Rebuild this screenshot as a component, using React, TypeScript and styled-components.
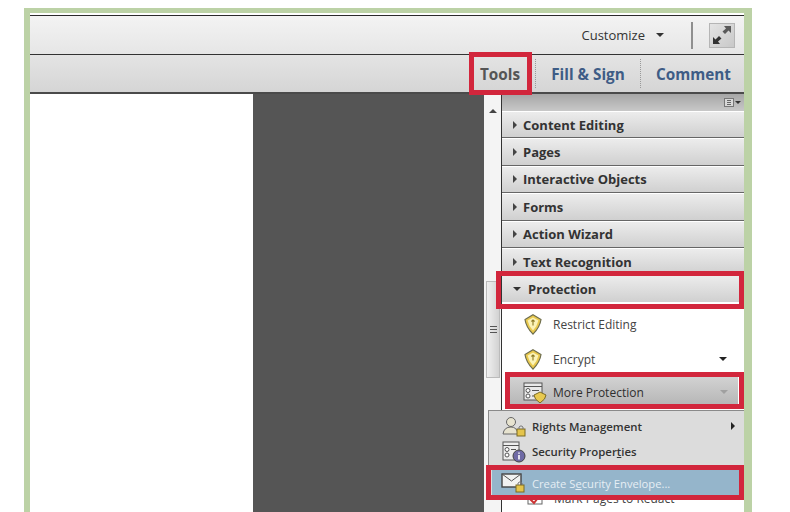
import React from "react";
import styled, { createGlobalStyle } from "styled-components";

const Global = createGlobalStyle`
  html, body { margin: 0; padding: 0; background: #fff; width: 790px; height: 512px; overflow: hidden; }
  * { box-sizing: border-box; }
  body { font-family: "Open Sans", "Liberation Sans", sans-serif; }
`;

const Frame = styled.div`
  position: relative;
  margin: 8px 0 0 24px;
  width: 728px;
  height: 504px;
  background: #bcd2a6;
  padding: 5px 8px 0 6px;
  overflow: hidden;
`;
const Window = styled.div`
  display: flex;
  flex-direction: column;
  height: 100%;
  background: #fff;
  padding-top: 2px;
`;
const TopBar = styled.div`
  height: 40px;
  flex: none;
  border-top: 1px solid #2a2a2a;
  border-bottom: 1px solid #333;
  background: linear-gradient(#f3f3f3, #e6e6e6);
  display: flex;
  align-items: center;
  justify-content: flex-end;
  padding-right: 9px;
`;
const Customize = styled.span`
  font-size: 13px;
  color: #333;
  margin-right: 11px;
`;
const Caret = styled.span<{ $color?: string; $size?: number }>`
  width: 0;
  height: 0;
  flex: none;
  border-left: ${(p) => p.$size ?? 4}px solid transparent;
  border-right: ${(p) => p.$size ?? 4}px solid transparent;
  border-top: ${(p) => p.$size ?? 4}px solid ${(p) => p.$color ?? "#333"};
`;
const VSep = styled.span`
  width: 2px;
  height: 27px;
  background: #8f8f8f;
  margin: 0 16px 0 27px;
`;
const ExpandButton = styled.span`
  width: 26px;
  height: 25px;
  background: linear-gradient(135deg, #e4e4e4, #c8c8c8);
  border: 1px solid #b5b5b5;
  display: flex;
  align-items: center;
  justify-content: center;
`;
const TabBar = styled.div`
  height: 39px;
  flex: none;
  background: linear-gradient(#e4e4e4, #d5d5d5);
  border-bottom: 2px solid #4a4a4a;
  display: flex;
  align-items: center;
  justify-content: flex-end;
`;
const Tab = styled.span<{ $active?: boolean; $w: number }>`
  width: ${(p) => p.$w}px;
  text-align: center;
  font-size: 15.3px;
  font-weight: 700;
  color: ${(p) => (p.$active ? "#555" : "#3e5c86")};
  white-space: nowrap;
`;
const TabSep = styled.span`
  height: 29px;
  border-left: 1px dotted #999;
`;
const LastTabSep = styled(TabSep)`
  margin-right: 2px;
`;
const Body = styled.div`
  flex: 1;
  display: flex;
  min-height: 0;
`;
const Doc = styled.div`
  width: 223px;
  background: #fff;
  flex: none;
`;
const Gutter = styled.div`
  width: 231px;
  background: #555;
  flex: none;
`;
const Scroll = styled.div`
  width: 18px;
  flex: none;
  background: #f4f4f4;
  border-right: 1px solid #333;
  padding: 15px 1px 0 2px;
  display: flex;
  flex-direction: column;
  align-items: center;
`;
const UpArrow = styled.span`
  width: 0;
  height: 0;
  border-left: 4px solid transparent;
  border-right: 4px solid transparent;
  border-bottom: 4px solid #444;
  margin-bottom: 168px;
`;
const Thumb = styled.div`
  width: 14px;
  height: 97px;
  background: linear-gradient(90deg, #f0f0f0, #d2d2d2);
  border: 1px solid #bbb;
  display: flex;
  align-items: center;
  justify-content: center;
`;
const Grip = styled.span`
  width: 7px;
  height: 7px;
  background: repeating-linear-gradient(#555 0 1px, transparent 1px 3px);
`;
const Panel = styled.div`
  flex: 1;
  background: #fff;
  display: flex;
  flex-direction: column;
`;
const PanelHead = styled.div`
  height: 17px;
  flex: none;
  background: linear-gradient(#a6a6a6, #c8c8c8);
  display: flex;
  align-items: center;
  justify-content: flex-end;
  gap: 1px;
  padding-right: 3px;
`;
const MiniIcon = styled.span`
  width: 10px;
  height: 9px;
  background: #d8d8d8;
  border: 1px solid #777;
  display: flex;
  align-items: center;
  justify-content: center;
  &::after {
    content: "";
    width: 4px;
    height: 5px;
    background: repeating-linear-gradient(#666 0 1px, transparent 1px 2px);
  }
`;
const Section = styled.div`
  height: 27.4px;
  flex: none;
  display: flex;
  align-items: center;
  gap: 6px;
  padding-left: 11px;
  background: linear-gradient(#ececec, #d0d0d0);
  border-top: 1px solid #fff;
  border-bottom: 1px solid #666;
  font-size: 13px;
  font-weight: 700;
  color: #333;
`;
const SideCaret = styled.span<{ $color?: string }>`
  width: 0;
  height: 0;
  flex: none;
  border-top: 4px solid transparent;
  border-bottom: 4px solid transparent;
  border-left: 4px solid ${(p) => p.$color ?? "#444"};
`;
const OpenSection = styled(Section)`
  gap: 7px;
  height: 27px;
  border-bottom: none;
`;
const Item = styled.div<{ $h: number }>`
  height: ${(p) => p.$h}px;
  flex: none;
  display: flex;
  align-items: center;
  padding: 0 17px 0 22px;
  font-size: 12px;
  font-weight: 500;
  color: #444;
`;
const ItemLabel = styled.span`
  margin-left: 11px;
  flex: 1;
`;
const SelectedItem = styled(Item)`
  background: linear-gradient(#d2d2d2, #b4b4b4);
  margin: 6px 6px 0 8px;
  padding: 0 10px 0 13px;
  color: #2f2f2f;
  ${ItemLabel} { margin-left: 6px; }
`;
const Menu = styled.div`
  position: absolute;
  left: 464px;
  top: 402px;
  width: 256px;
  height: 90px;
  background: #dcdcdc;
  border: 1px solid #8a8a8a;
  border-right: none;
  border-bottom: none;
  padding: 2px 0 0 13px;
  display: flex;
  flex-direction: column;
`;
const MenuRow = styled.div<{ $h: number }>`
  height: ${(p) => p.$h}px;
  flex: none;
  display: flex;
  align-items: center;
  gap: 6px;
  padding-right: 9px;
  font-size: 11.4px;
  font-weight: 600;
  color: #333;
  u { text-underline-offset: 1px; }
`;
const MenuLabel = styled.span`
  flex: 1;
`;
const MenuSep = styled.div`
  height: 2px;
  background: #f4f4f4;
  border-top: 1px solid #bbb;
  margin: 4px 0 0 -13px;
`;
const Highlight = styled.div`
  position: absolute;
  left: 468px;
  top: 462px;
  width: 250px;
  height: 26px;
  background: #95b5cb;
  display: flex;
  align-items: center;
  gap: 7px;
  padding-left: 9px;
  font-size: 11.2px;
  font-weight: 500;
  color: #e6eef4;
`;
const Beneath = styled.div`
  position: absolute;
  left: 478px;
  top: 480px;
  width: 242px;
  height: 20px;
  display: flex;
  align-items: center;
  gap: 8px;
  background: #fff;
  padding-left: 23px;
  font-size: 12px;
  font-weight: 500;
  color: #444;
`;
const RedBox = styled.div<{ $x: number; $y: number; $w: number; $h: number }>`
  position: absolute;
  left: ${(p) => p.$x - 24}px;
  top: ${(p) => p.$y - 8}px;
  width: ${(p) => p.$w}px;
  height: ${(p) => p.$h}px;
  border: 5px solid #d2263c;
  pointer-events: none;
`;

const Shield = () => (
  <svg width="18" height="21" viewBox="0 0 18 21">
    <path d="M9 .8 L17 5.5 Q16 13 9 20.2 Q2 13 1 5.5 Z" fill="#e9c94e" stroke="#6d6d4e" strokeWidth="1.2" />
    <path d="M9 3.4 L14.4 6.5 Q13.5 11.5 9 16.5 Q4.5 11.5 3.6 6.5 Z" fill="#fbf3b8" />
    <path d="M9 6 L9 11.5 M7.4 7.5 L9 6 L10.6 7.5" fill="none" stroke="#8d7a24" strokeWidth="1.1" />
  </svg>
);
const FormIcon = () => (
  <svg width="24" height="21" viewBox="0 0 24 21">
    <rect x="1" y="1" width="18" height="17" fill="#e8e8e8" stroke="#555" />
    <path d="M1 4.5 H19" stroke="#555" />
    <circle cx="5" cy="8.5" r="2" fill="#fff" stroke="#555" />
    <circle cx="5" cy="14" r="2" fill="#fff" stroke="#555" />
    <path d="M9 8.5 H16 M9 14 H13" stroke="#555" />
    <path d="M17 10 L23 13 Q23 17 17 21 Q11 17 11 13 Z" fill="#e8c94f" stroke="#7a6a25" />
  </svg>
);
const UserLock = () => (
  <svg width="24" height="21" viewBox="0 0 24 21">
    <circle cx="9" cy="6" r="4.5" fill="#e7e3cf" stroke="#666" />
    <path d="M1 18 Q2 11 9 11 Q15 11 16 18 Z" fill="#e7e3cf" stroke="#666" />
    <rect x="15" y="13" width="8" height="7" fill="#e4c44c" stroke="#7a6a25" />
    <path d="M17 13 V11 Q19 8.5 21 11 V13" fill="none" stroke="#777" />
  </svg>
);
const PropsIcon = () => (
  <svg width="24" height="22" viewBox="0 0 24 22">
    <rect x="1" y="1" width="16" height="18" fill="#eee" stroke="#555" />
    <path d="M1 4.5 H17" stroke="#555" />
    <circle cx="5" cy="8.5" r="2" fill="#fff" stroke="#555" />
    <circle cx="5" cy="14" r="2" fill="#fff" stroke="#555" />
    <path d="M9 8.5 H14" stroke="#555" />
    <circle cx="17" cy="15" r="6" fill="#6f6aa5" stroke="#444" />
    <path d="M17 11.5 V12.8 M17 14 V18.5" stroke="#fff" strokeWidth="1.6" />
  </svg>
);
const EnvelopeLock = () => (
  <svg width="24" height="22" viewBox="0 0 24 22">
    <rect x="1" y="2" width="19" height="13" fill="#f2f2f2" stroke="#444" strokeWidth="1.4" />
    <path d="M1 2 L10.5 9 L20 2" fill="none" stroke="#555" />
    <rect x="15" y="13" width="8" height="7" fill="#e4c44c" stroke="#7a6a25" />
    <path d="M17 13 V11 Q19 8.5 21 11 V13" fill="none" stroke="#777" />
  </svg>
);
const RedactIcon = () => (
  <svg width="21" height="18" viewBox="0 0 21 18">
    <rect x="3" y="1" width="14" height="14" fill="#fff" stroke="#666" />
    <path d="M5 10 L9 14 L16 5" fill="none" stroke="#c33" strokeWidth="2" />
  </svg>
);
const Expand = () => (
  <svg width="22" height="22" viewBox="0 0 22 22">
    <path d="M13 2 H20 V9 L17.5 6.5 L14 10 L11.5 7.5 L15 4.5 Z" fill="#5a5a5a" />
    <path d="M9 20 H2 V13 L4.5 15.5 L8 12 L10.5 14.5 L7 17.5 Z" fill="#333" />
  </svg>
);

const sections = ["Content Editing", "Pages", "Interactive Objects", "Forms", "Action Wizard", "Text Recognition"];

export default function App() {
  return (
    <>
      <Global />
      <Frame>
        <Window>
          <TopBar>
            <Customize>Customize</Customize>
            <Caret />
            <VSep />
            <ExpandButton><Expand /></ExpandButton>
          </TopBar>
          <TabBar>
            <Tab $active $w={70}>Tools</Tab>
            <TabSep />
            <Tab $w={104}>Fill &amp; Sign</Tab>
            <LastTabSep />
            <Tab $w={101}>Comment</Tab>
          </TabBar>
          <Body>
            <Doc />
            <Gutter />
            <Scroll>
              <UpArrow />
              <Thumb><Grip /></Thumb>
            </Scroll>
            <Panel>
              <PanelHead>
                <MiniIcon />
                <Caret $size={3} />
              </PanelHead>
              {sections.map((s) => (
                <Section key={s}><SideCaret />{s}</Section>
              ))}
              <OpenSection><Caret />Protection</OpenSection>
              <Item $h={45}><Shield /><ItemLabel>Restrict Editing</ItemLabel></Item>
              <Item $h={24}><Shield /><ItemLabel>Encrypt</ItemLabel><Caret $color="#222" /></Item>
              <SelectedItem $h={30}><FormIcon /><ItemLabel>More Protection</ItemLabel><Caret $color="#a0a0a0" /></SelectedItem>
            </Panel>
          </Body>
        </Window>
        <Menu>
          <MenuRow $h={26}><UserLock /><MenuLabel>Rights M<u>a</u>nagement</MenuLabel><SideCaret $color="#222" /></MenuRow>
          <MenuRow $h={25}><PropsIcon /><MenuLabel>Security Proper<u>t</u>ies</MenuLabel></MenuRow>
          <MenuSep />
        </Menu>
        <Beneath><RedactIcon /><span>Mark Pages to Redact</span></Beneath>
        <Highlight><EnvelopeLock /><span>Create S<u>e</u>curity Envelope...</span></Highlight>
        <RedBox $x={469} $y={52} $w={63} $h={43} />
        <RedBox $x={496} $y={271} $w={248} $h={38} />
        <RedBox $x={505} $y={372} $w={239} $h={37} />
        <RedBox $x={486} $y={465} $w={258} $h={35} />
      </Frame>
    </>
  );
}
